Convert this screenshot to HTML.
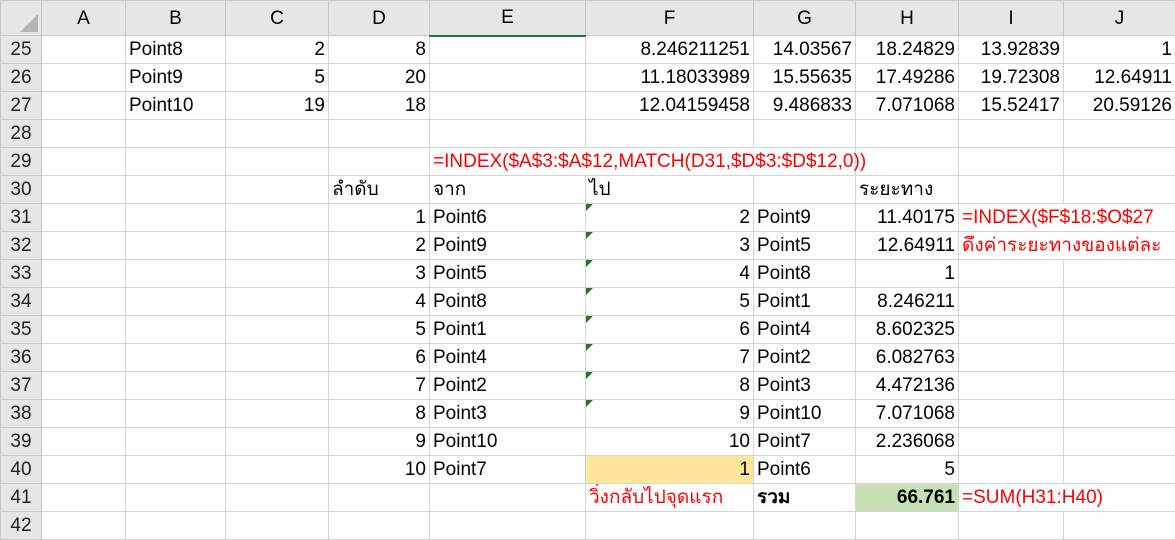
<!DOCTYPE html>
<html><head><meta charset="utf-8"><style>
body{margin:0;width:1175px;height:518px;overflow:hidden;background:#fff;font-family:"Liberation Sans","DejaVu Sans",sans-serif;}
table{border-collapse:collapse;table-layout:fixed;position:absolute;left:0;top:0;width:1175px}
td{height:27px;border:1px solid #d4d4d4;font-size:19px;padding:0 3px;white-space:nowrap;overflow:hidden;color:#000;position:relative;line-height:27px;box-sizing:border-box}
td.h{background:#e6e6e6;text-align:center;color:#222;border-color:#c8c8c8}
tr.top td{height:35px;background:#e6e6e6;text-align:center;border-color:#c8c8c8}
tr td{height:28px}
.r{text-align:right}
.red{color:#f00}
.tri:before{content:"";position:absolute;left:0;top:0;border-top:7px solid #1e7a1e;border-right:7px solid transparent}
</style></head><body>
<table>
<colgroup><col style="width:41px"><col style="width:84px"><col style="width:100px"><col style="width:103px"><col style="width:101px"><col style="width:156px"><col style="width:168px"><col style="width:102px"><col style="width:103px"><col style="width:105px"><col style="width:112px"></colgroup>
<tr class="top"><td style="position:relative"><div style="position:absolute;right:3px;bottom:3px;border-bottom:18px solid #b4b4b4;border-left:18px solid transparent"></div></td><td>A</td><td>B</td><td>C</td><td>D</td><td style="border-bottom:2px solid #217346">E</td><td>F</td><td>G</td><td>H</td><td>I</td><td>J</td></tr>
<tr><td class="h">25</td><td></td><td>Point8</td><td class="r">2</td><td class="r">8</td><td></td><td class="r">8.246211251</td><td class="r">14.03567</td><td class="r">18.24829</td><td class="r">13.92839</td><td class="r">1</td></tr>
<tr><td class="h">26</td><td></td><td>Point9</td><td class="r">5</td><td class="r">20</td><td></td><td class="r">11.18033989</td><td class="r">15.55635</td><td class="r">17.49286</td><td class="r">19.72308</td><td class="r">12.64911</td></tr>
<tr><td class="h">27</td><td></td><td>Point10</td><td class="r">19</td><td class="r">18</td><td></td><td class="r">12.04159458</td><td class="r">9.486833</td><td class="r">7.071068</td><td class="r">15.52417</td><td class="r">20.59126</td></tr>
<tr><td class="h">28</td><td></td><td></td><td></td><td></td><td></td><td></td><td></td><td></td><td></td><td></td></tr>
<tr><td class="h">29</td><td></td><td></td><td></td><td></td><td colspan="3" class="red" style="overflow:visible;z-index:2">=INDEX($A$3:$A$12,MATCH(D31,$D$3:$D$12,0))</td><td style="border-left-color:transparent"></td><td></td><td></td></tr>
<tr><td class="h">30</td><td></td><td></td><td></td><td>ลำดับ</td><td>จาก</td><td>ไป</td><td></td><td>ระยะทาง</td><td></td><td></td></tr>
<tr><td class="h">31</td><td></td><td></td><td></td><td class="r">1</td><td>Point6</td><td class="r tri">2</td><td>Point9</td><td class="r">11.40175</td><td colspan="2" class="red">=INDEX($F$18:$O$27</td></tr>
<tr><td class="h">32</td><td></td><td></td><td></td><td class="r">2</td><td>Point9</td><td class="r tri">3</td><td>Point5</td><td class="r">12.64911</td><td colspan="2" class="red">ดึงค่าระยะทางของแต่ละ</td></tr>
<tr><td class="h">33</td><td></td><td></td><td></td><td class="r">3</td><td>Point5</td><td class="r tri">4</td><td>Point8</td><td class="r">1</td><td></td><td></td></tr>
<tr><td class="h">34</td><td></td><td></td><td></td><td class="r">4</td><td>Point8</td><td class="r tri">5</td><td>Point1</td><td class="r">8.246211</td><td></td><td></td></tr>
<tr><td class="h">35</td><td></td><td></td><td></td><td class="r">5</td><td>Point1</td><td class="r tri">6</td><td>Point4</td><td class="r">8.602325</td><td></td><td></td></tr>
<tr><td class="h">36</td><td></td><td></td><td></td><td class="r">6</td><td>Point4</td><td class="r tri">7</td><td>Point2</td><td class="r">6.082763</td><td></td><td></td></tr>
<tr><td class="h">37</td><td></td><td></td><td></td><td class="r">7</td><td>Point2</td><td class="r tri">8</td><td>Point3</td><td class="r">4.472136</td><td></td><td></td></tr>
<tr><td class="h">38</td><td></td><td></td><td></td><td class="r">8</td><td>Point3</td><td class="r tri">9</td><td>Point10</td><td class="r">7.071068</td><td></td><td></td></tr>
<tr><td class="h">39</td><td></td><td></td><td></td><td class="r">9</td><td>Point10</td><td class="r">10</td><td>Point7</td><td class="r">2.236068</td><td></td><td></td></tr>
<tr><td class="h">40</td><td></td><td></td><td></td><td class="r">10</td><td>Point7</td><td class="r" style="background:#ffe699">1</td><td>Point6</td><td class="r">5</td><td></td><td></td></tr>
<tr><td class="h">41</td><td></td><td></td><td></td><td></td><td></td><td class="red">วิ่งกลับไปจุดแรก</td><td style="font-weight:bold">รวม</td><td class="r" style="background:#c6e0b4;font-weight:bold">66.761</td><td colspan="2" class="red">=SUM(H31:H40)</td></tr>
<tr><td class="h">42</td><td></td><td></td><td></td><td></td><td></td><td></td><td></td><td></td><td></td><td></td></tr>
</table>
</body></html>
